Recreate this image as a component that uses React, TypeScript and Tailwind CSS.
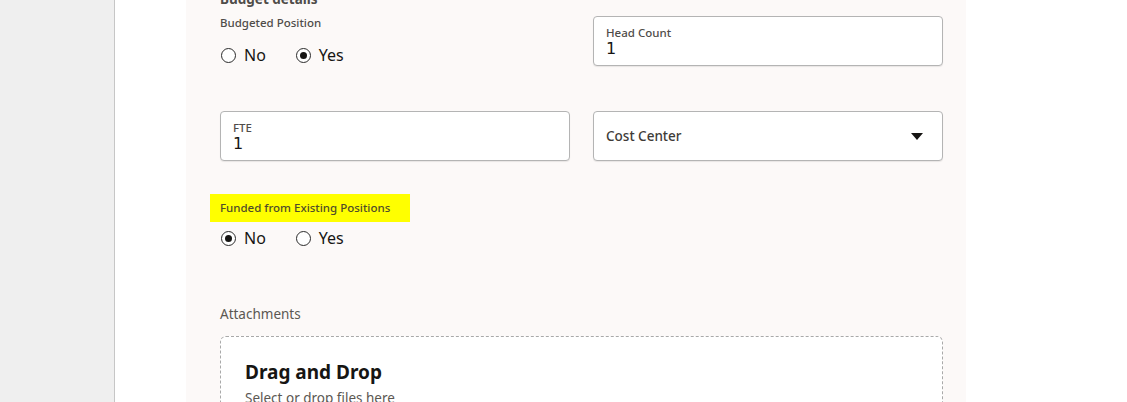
import React from "react";

function Radio({ checked, label }: { checked: boolean; label: string }) {
  return (
    <div className="flex items-center h-[24px]">
      <span className="w-[15px] h-[15px] rounded-full border-[1.5px] border-[#2b2b2b] flex items-center justify-center bg-white">
        {checked && <span className="w-[7px] h-[7px] rounded-full bg-[#161513]" />}
      </span>
      <span className="ml-[8px] text-[16px] text-[#161513] leading-[24px]">{label}</span>
    </div>
  );
}

function RadioGroup({ value }: { value: "No" | "Yes" }) {
  return (
    <div className="flex items-center gap-[30px] pl-[1px]">
      <Radio checked={value === "No"} label="No" />
      <Radio checked={value === "Yes"} label="Yes" />
    </div>
  );
}

function TextField({ label, value }: { label: string; value: string }) {
  return (
    <div className="h-[50px] bg-white border border-[#b4b4b4] rounded-[4px] shadow-[0_1px_1px_rgba(0,0,0,0.08)] px-[12px] pt-[8px]">
      <div className="text-[11.5px] leading-[15px] font-medium text-[#4f4c49]">{label}</div>
      <div className="text-[16px] leading-[17px] text-[#161513] font-['DejaVu_Sans',sans-serif]">{value}</div>
    </div>
  );
}

export default function App() {
  return (
    <div className="w-[1127px] h-[402px] overflow-hidden flex bg-white font-['Noto_Sans',sans-serif]">
      <div className="w-[115px] h-full bg-[#efefef] border-r border-[#c6c6c6] shrink-0" />
      <div className="w-[71px] h-full bg-white shrink-0" />
      <div className="w-[780px] h-full bg-[#fcf9f8] shrink-0 px-[34px]">
        <div className="w-[723px] flex flex-col">
          <div className="-mt-[11px] h-[20px] text-[13.5px] leading-[20px] font-bold text-[#4f4c49]">Budget details</div>
          <div className="mt-[7px] h-[50px] grid grid-cols-2 gap-x-[23px]">
            <div className="flex flex-col">
              <div className="-mt-[1px] text-[11.5px] leading-[16px] font-medium text-[#4f4c49]">Budgeted Position</div>
              <div className="mt-[12px]">
                <RadioGroup value="Yes" />
              </div>
            </div>
            <TextField label="Head Count" value="1" />
          </div>
          <div className="mt-[45px] h-[50px] grid grid-cols-2 gap-x-[23px]">
            <TextField label="FTE" value="1" />
            <div className="h-[50px] bg-white border border-[#b4b4b4] rounded-[4px] shadow-[0_1px_1px_rgba(0,0,0,0.08)] pl-[12px] pr-[19px] flex items-center justify-between">
              <span className="text-[13.5px] font-medium text-[#3e3b38]">Cost Center</span>
              <svg width="12" height="7" viewBox="0 0 12 7">
                <path d="M0 0 H12 L6 7 Z" fill="#161513" />
              </svg>
            </div>
          </div>
          <div className="mt-[33px] flex">
            <span className="-ml-[10px] pl-[10px] w-[200px] h-[28px] flex items-center bg-[#ffff00] text-[11.5px] font-medium text-[#4f4c2a]">
              Funded from Existing Positions
            </span>
          </div>
          <div className="mt-[4px]">
            <RadioGroup value="No" />
          </div>
          <div className="mt-[54px] text-[13.5px] leading-[20px] text-[#5b5752]">Attachments</div>
          <div className="mt-[12px] h-[120px] bg-white border border-dashed border-[#a9a9a9] rounded-[6px] pl-[24px] pt-[21px]">
            <div className="text-[19px] leading-[28px] font-bold text-[#161513]">Drag and Drop</div>
            <div className="mt-[2px] text-[13.5px] leading-[20px] text-[#5b5752]">Select or drop files here</div>
          </div>
        </div>
      </div>
      <div className="flex-1 h-full bg-white" />
    </div>
  );
}
